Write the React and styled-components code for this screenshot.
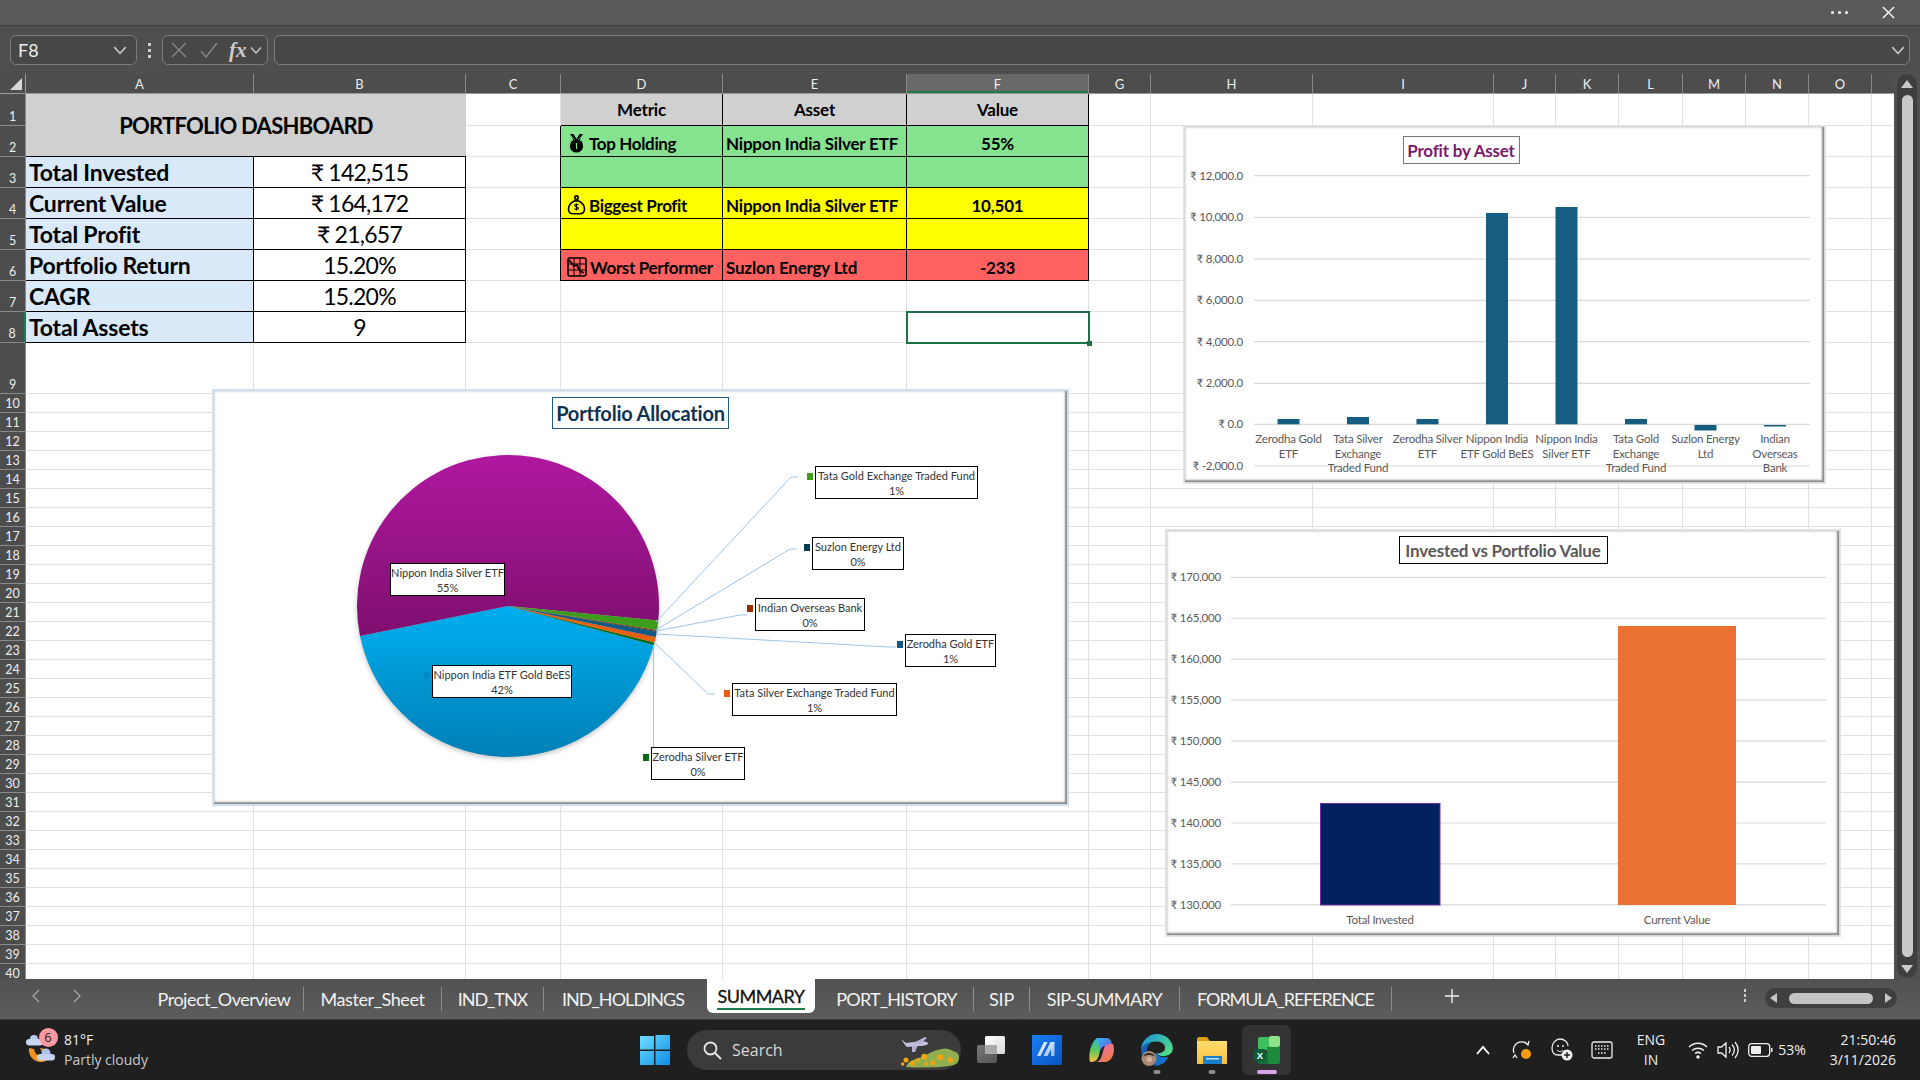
import React from "react";
import styled, { createGlobalStyle } from "styled-components";

const NARROW = `Lato, "Liberation Sans", sans-serif`;
const UI = `"Open Sans", "Noto Sans", sans-serif`;

const Global = createGlobalStyle`
  html, body { margin: 0; padding: 0; background: #1f1f1f; }
  body { font-family: ${NARROW}; overflow: hidden; }
  * { box-sizing: border-box; }
`;

const COLS = [228, 212, 95, 162, 184, 182, 62, 162, 181, 62, 63, 64, 63, 63, 63, 63, 22];
const LETTERS = "ABCDEFGHIJKLMNO".split("");
const ROWS = [32, 31, 31, 31, 31, 31, 31, 31, 51, ...Array(31).fill(19)];

const Window = styled.div`
  width: 1920px; height: 1080px; display: flex; flex-direction: column; overflow: hidden;
`;
const TitleBar = styled.div`
  height: 26px; flex: none; background: #5a5a5a; border-bottom: 1px solid #3c3c3c;
  display: flex; align-items: center; justify-content: flex-end; padding-right: 25px; gap: 34px; color: #fff;
`;
const Dots = styled.div`
  display: flex; gap: 4px;
  span { width: 3px; height: 3px; border-radius: 50%; background: #fff; display: block; }
`;
const FormulaBar = styled.div`
  height: 48px; flex: none; background: #4f4f4f; display: flex; align-items: center; padding: 0 10px; color: #ddd;
`;
const NameBox = styled.div`
  width: 127px; height: 30px; border: 1px solid #7c7c7c; border-radius: 6px; background: #474747;
  display: flex; align-items: center; justify-content: space-between; padding: 0 8px 0 7px;
  font: 400 18px ${NARROW}; color: #eee;
`;
const Grip = styled.div`
  width: 25px; display: flex; flex-direction: column; align-items: center; gap: 3px;
  span { width: 3px; height: 3px; background: #ccc; display: block; }
`;
const FxBox = styled.div`
  width: 106px; height: 30px; border: 1px solid #7c7c7c; border-radius: 6px; background: #474747;
  display: flex; align-items: center; padding: 0 3px 0 7px; gap: 11px; margin-right: 6px;
`;
const FxText = styled.i`font: italic 700 21px "Liberation Serif", serif; color: #ccc; margin-right: -9px; margin-left: -1px;`;
const FormulaInput = styled.div`
  flex: 1; height: 30px; border: 1px solid #7c7c7c; border-radius: 6px; background: #474747;
  display: flex; align-items: center; justify-content: flex-end; padding-right: 3px;
`;
const SheetRow = styled.div`flex: 1; display: flex; min-height: 0;`;
const SheetMain = styled.div`flex: 1; min-width: 0; display: flex; flex-direction: column;`;
const ColHeader = styled.div`
  height: 20px; flex: none; display: flex; background: #4d4d4d; border-bottom: 1px solid #9a9a9a;
`;
const Corner = styled.div`
  width: 26px; flex: none; display: flex; align-items: flex-end; justify-content: flex-end; padding: 0 3px 3px 0;
  border-right: 1px solid #9a9a9a;
  &::after { content: ""; width: 0; height: 0;
    border-style: solid; border-width: 0 0 12px 12px; border-color: transparent transparent #d8d8d8 transparent; }
`;
const ColCell = styled.div`
  width: ${p => p.$w}px; flex: none; display: flex; align-items: center; justify-content: center;
  font: 400 13px ${NARROW}; color: #eee;
  border-right: ${p => (p.$last ? "none" : "1px solid #8a8a8a")};
  background: ${p => (p.$active ? "#686868" : "transparent")};
  box-shadow: ${p => (p.$active ? "inset 0 -2px 0 #1f7a4c" : "none")};
`;
const Body = styled.div`flex: 1; display: flex; min-height: 0;`;
const RowHeaders = styled.div`
  width: 26px; flex: none; background: #4d4d4d; overflow: hidden; display: flex; flex-direction: column;
`;
const RowNum = styled.div`
  height: ${p => p.$h}px; flex: none; display: flex; align-items: ${p => (p.$h > 19 ? "flex-end" : "center")}; justify-content: center;
  font: 400 12.5px ${NARROW}; color: #eee; padding-bottom: ${p => (p.$h > 19 ? 1 : 0)}px;
  border-bottom: 1px solid #8a8a8a; border-right: ${p => (p.$active ? "2px solid #1f7a4c" : "1px solid #8a8a8a")};
`;
const SheetArea = styled.div`flex: 1; position: relative; overflow: hidden; background: #fff;`;
const Grid = styled.div`
  display: grid; height: 100%;
  grid-template-columns: ${COLS.map(c => c + "px").join(" ")};
  grid-template-rows: ${ROWS.map(c => c + "px").join(" ")};
`;
const Blank = styled.div`border-right: 1px solid #e0e0e0; border-bottom: 1px solid #e0e0e0;`;
const Merged = styled.div`
  grid-column: 1 / span 2; grid-row: 1 / span 2; background: #d0d0d0; border-bottom: 1px solid #000;
  display: flex; align-items: center; justify-content: center;
  font: 700 22px ${NARROW}; color: #000; white-space: nowrap; letter-spacing: -0.75px;
`;
const KpiLabel = styled.div`
  background: #daE9f8; border-right: 1px solid #000; border-bottom: 1px solid #000;
  display: flex; align-items: flex-end; padding: 0 0 0 3px; white-space: nowrap;
  font: 700 23px/29px ${NARROW}; color: #000; letter-spacing: -0.2px;
`;
const KpiValue = styled.div`
  background: #fff; border-right: 1px solid #000; border-bottom: 1px solid #000;
  display: flex; align-items: flex-end; justify-content: center; white-space: nowrap;
  font: 400 23px/29px ${NARROW}; color: #000; letter-spacing: -0.75px;
`;
const TONES = { gray: "#d0d0d0", green: "#85e28f", yellow: "#ffff00", red: "#ff6161" };
const MetricCell = styled.div`
  background: ${p => TONES[p.$tone]};
  border-right: 1px solid #000; border-bottom: 1px solid #000;
  box-shadow: ${p => (p.$first ? "-1px 0 0 #000" : "none")};
  display: flex; align-items: flex-end; gap: 3px; white-space: nowrap;
  justify-content: ${p => (p.$center ? "center" : "flex-start")};
  padding: ${p => (p.$tone === "gray" ? "0 3px 5px" : p.$first ? "0 0 2px 6px" : "0 3px 2px")};
  font: 700 17px/21px ${NARROW}; color: #000; letter-spacing: ${p => (p.$first ? -0.35 : -0.2)}px;
  position: relative;
  svg { flex: none; margin-bottom: 1px; }
`;
const Selected = styled.div`
  border: 2px solid #1f7145; position: relative; margin: -1px;
  z-index: 2;
  &::after { content: ""; position: absolute; right: -4px; bottom: -4px; width: 5px; height: 5px; background: #1f7145; }
`;
const VScroll = styled.div`
  width: 26px; flex: none; background: #505050; display: flex; padding: 0 3px 1px 3px;
`;
const VTrack = styled.div`
  flex: 1; background: #3e3e3e; border-radius: 10px; display: flex; flex-direction: column; align-items: center;
  padding: 6px 0 5px;
`;
const VThumb = styled.div`width: 11px; flex: 1; margin: 7px 0 8px; background: #c9c9c9; border-radius: 6px;`;
const Arrow = styled.div`
  flex: none; width: 0; height: 0;
  border-left: 6px solid transparent; border-right: 6px solid transparent;
  ${p => (p.$up ? "border-bottom: 8px solid #c9c9c9;" : "border-top: 8px solid #c9c9c9;")}
`;

/* charts */
const ChartFrame = styled.div`
  position: absolute; left: ${p => p.$x - 26}px; top: ${p => p.$y - 94}px;
  width: ${p => p.$w}px; height: ${p => p.$h}px; background: #fff;
  border: 1px solid ${p => p.$edge || "#d9d9d9"};
  box-shadow: inset -3px -3px 2px -1px #8b8b8b, inset 2px 2px 2px -1px #dcdcdc, 0 0 0 1px ${p => p.$edge || "#e4e4e4"};
  z-index: 3; display: flex; justify-content: center; align-items: flex-start; padding-top: ${p => p.$pad}px;
  svg.plot { position: absolute; left: -1px; top: -1px; }
  svg.plot text { font-family: ${NARROW}; }
`;
const ChartTitle = styled.div`
  position: relative; width: ${p => p.$w}px; height: ${p => p.$h}px; margin-left: ${p => p.$shift || 0}px;
  border: 1px solid ${p => p.$border}; color: ${p => p.$color}; background: #fff;
  display: flex; align-items: center; justify-content: center;
  font: 700 ${p => p.$size}px ${NARROW}; white-space: nowrap; letter-spacing: -0.2px;
`;
const PieLabel = styled.div`
  position: absolute; left: ${p => p.$l - 1}px; top: ${p => p.$t - 1}px; width: ${p => p.$w}px; height: 33px;
  background: #fff; border: 1px solid #000; text-align: center; white-space: nowrap;
  font: 400 11px/15px ${NARROW}; color: #333; padding-top: 1px;
  &::before { content: ""; position: absolute; left: -9px; top: 6px; width: 6px; height: 7px; background: ${p => p.$mark}; }
`;

/* tabs */
const TabBar = styled.div`
  height: 41px; flex: none; background: linear-gradient(#525252, #5c5c5c);
  border-bottom: 1px solid #3a3a3a; display: flex; align-items: flex-start; padding-left: 25px; color: #f2f2f2;
`;
const TabNav = styled.div`
  width: 120px; height: 33px; display: flex; align-items: center; gap: 29px; padding-left: 5px; flex: none;
`;
const Tab = styled.div`
  height: ${p => (p.$active ? 34 : 24)}px; margin: ${p => (p.$active ? "0 5px" : "8px 0 0")};
  width: ${p => p.$w}px; flex: none; display: flex; align-items: center; justify-content: center;
  font: 400 18px ${NARROW}; white-space: nowrap; letter-spacing: ${p => p.$ls}px;
  color: ${p => (p.$active ? "#111" : "#f2f2f2")};
  border-right: ${p => (p.$active || p.$plain ? "none" : "1px solid #8d8d8d")};
  ${p => p.$active && `background: #fff; border-radius: 0 0 6px 6px; position: relative; -webkit-text-stroke: 0.3px #111;
    &::after { content: ""; position: absolute; left: 10px; right: 10px; bottom: 3px; height: 2px; background: #1f7a4c; }`}
`;
const Plus = styled.div`width: 119px; height: 33px; flex: none; display: flex; align-items: center; justify-content: center;`;
const TabGrip = styled(Grip)`margin: 0 9px 0 auto; width: 22px; height: 33px; justify-content: center; gap: 2.5px; span { height: 2.5px; width: 2.5px; }`;
const HScroll = styled.div`
  margin: 9px 23px 0 0; width: 132px; height: 20px; flex: none; border-radius: 10px; background: #3f3f3f;
  display: flex; align-items: center; justify-content: space-between; padding: 0 5px;
`;
const HThumb = styled.div`width: 84px; height: 11px; border-radius: 6px; background: #c4c4c4;`;
const HArrow = styled.div`
  width: 0; height: 0; border-top: 5px solid transparent; border-bottom: 5px solid transparent;
  ${p => (p.$left ? "border-right: 7px solid #c4c4c4;" : "border-left: 7px solid #c4c4c4;")}
`;

/* taskbar */
const Taskbar = styled.div`
  height: 60px; flex: none; background: #1f1f1f; color: #eee; font-family: ${UI};
  display: flex; align-items: center;
`;
const Weather = styled.div`width: 640px; flex: none; display: flex; align-items: center; padding-left: 26px; gap: 7px;`;
const WeatherIcon = styled.div`width: 31px; height: 30px; position: relative;`;
const Badge = styled.div`
  position: absolute; left: 12.5px; top: -7px; width: 19px; height: 19px; border-radius: 50%;
  background: #ff9aa2; color: #222; font: 400 13px/19px ${UI}; text-align: center;
`;
const Stack = styled.div`display: flex; flex-direction: column; font-size: 14px; line-height: 20px; align-items: ${p => p.$align || "flex-start"};`;
const Muted = styled.span`color: #c8c8c8;`;
const Search = styled.div`
  width: 274px; height: 40px; margin-left: 17px; flex: none; background: #3b3b3b; border-radius: 20px; position: relative;
  display: flex; align-items: center; padding-left: 15px; gap: 10px; font-size: 16px; color: #d8d8d8;
`;
const SearchArt = styled.svg`position: absolute; right: 1px; top: 2px;`;
const Apps = styled.div`display: flex; margin-left: 3px; flex: none;`;
const AppSlot = styled.div`
  width: 55px; height: 50px; flex: none; display: flex; align-items: center; justify-content: center; position: relative;
  &::before { content: ""; position: absolute; inset: 0 3px; border-radius: 6px; background: ${p => (p.$open ? "#333" : "transparent")}; }
  > svg { position: relative; }
`;
const RunDot = styled.span`
  position: absolute; left: 50%; bottom: 1px; transform: translateX(-50%); height: 4px; border-radius: 3px;
  width: ${p => (p.$open ? 20 : 7)}px; background: ${p => (p.$open ? "#d4a6e6" : "#8c8c8c")};
`;
const TrayRow = styled.div`margin-left: auto; display: flex; align-items: center; padding-right: 24px; flex: none;`;
const TraySlot = styled.div`
  width: ${p => p.$w}px; flex: none; display: flex; align-items: center; justify-content: ${p => p.$j || "center"};
  font-size: 14px; line-height: 20px; white-space: nowrap;
`;

const Chev = ({ c = "#ccc", s = 14 }) => (
  <svg width={s} height={s} viewBox="0 0 14 14" fill="none"><path d="M2 4.5 7 10l5-5.5" stroke={c} strokeWidth="1.4" /></svg>
);

const Medal = () => (
  <svg width="19" height="19" viewBox="0 0 19 19">
    <path d="M3 0h3.5l3 5 3-5H16l-3.5 6.5L16 8l-13 0 3.5-1.5z" fill="#000" />
    <path d="M3.5 1.2 8 6M15.5 1.2 11 6" stroke="#85e28f" strokeWidth=".8" />
    <circle cx="9.5" cy="12" r="6.6" fill="#000" />
    <path d="M9.5 9v6" stroke="#85e28f" strokeWidth="1.2" />
  </svg>
);
const Bag = () => (
  <svg width="19" height="20" viewBox="0 0 19 20" fill="none" stroke="#000" strokeWidth="1.6">
    <circle cx="9.5" cy="2.6" r="1.7" />
    <path d="M7.5 5.2h4M7.3 6c-4 2-5.8 5-5.8 8 0 3 2 4.8 5 4.8h6c3 0 5-1.8 5-4.800 0-3-1.800-6-5.800-8z" />
    <path d="M11.5 9.8c-.5-.8-3.7-1-3.9.5-.2 1.7 4 1.2 3.900 3-.1 1.500-3.400 1.300-4 .3M9.500 8.500v7" strokeWidth="1.1" />
  </svg>
);
const DownChart = () => (
  <svg width="20" height="20" viewBox="0 0 20 20" fill="none" stroke="#000">
    <rect x="1" y="1" width="18" height="18" rx="2" strokeWidth="1.6" />
    <path d="M1 7h18M1 13h18M7 1v18M13 1v18" strokeWidth="1" />
    <path d="M2 3l5 6 3-1 3 6 4 2" strokeWidth="1.8" />
  </svg>
);

/* Pie helper */
const CX = 508, CY = 606, R = 151;
const ptY = (y, right = true) => {
  const dy = y - CY;
  const dx = Math.sqrt(R * R - dy * dy);
  return [CX + (right ? dx : -dx), y];
};
const wedge = (y1, y2) => {
  const a = ptY(y1), b = ptY(y2);
  return `M${CX} ${CY}L${a[0]} ${a[1]}A${R} ${R} 0 0 1 ${b[0]} ${b[1]}Z`;
};
const magB = ptY(620.5), blueL = ptY(636, false), blueR = ptY(645);

const PieChart = () => (
  <ChartFrame $x={213} $y={390} $w={855} $h={415} $edge="#cfe0f2" $pad={6}>
    <svg className="plot" width="855" height="415" viewBox="213 390 855 415">
      <defs>
        <linearGradient id="mag" gradientUnits="userSpaceOnUse" x1="0" y1="455" x2="0" y2="640">
          <stop offset="0" stopColor="#b0189f" /><stop offset="1" stopColor="#7d0f6e" />
        </linearGradient>
        <linearGradient id="blu" gradientUnits="userSpaceOnUse" x1="0" y1="606" x2="0" y2="757">
          <stop offset="0" stopColor="#00aeef" /><stop offset="1" stopColor="#007fb6" />
        </linearGradient>
        <filter id="soft" x="-10%" y="-10%" width="120%" height="120%">
          <feGaussianBlur stdDeviation="2.5" />
        </filter>
      </defs>
      <ellipse cx={CX} cy={CY + 2} rx={R} ry={R} fill="#9a9a9a" filter="url(#soft)" opacity=".6" />
      <path d={`M${CX} ${CY}L${blueR[0]} ${blueR[1]}A${R} ${R} 0 0 1 ${blueL[0]} ${blueL[1]}Z`} fill="url(#blu)" />
      <path d={`M${CX} ${CY}L${blueL[0]} ${blueL[1]}A${R} ${R} 0 1 1 ${magB[0]} ${magB[1]}Z`} fill="url(#mag)" />
      <path d={wedge(642.5, 645)} fill="#0a6a14" />
      <path d={wedge(637, 642.5)} fill="#e8600f" />
      <path d={wedge(632, 637)} fill="#0f5a85" />
      <path d={wedge(631, 632)} fill="#003a55" />
      <path d={wedge(630, 631)} fill="#9a3005" />
      <path d={wedge(620.5, 630)} fill="#3c9d1c" />
      <g fill="none" stroke="#9cc4ea" strokeWidth="1">
        <path d="M656 622L791 477h7" />
        <path d="M656 630L790 549h7" />
        <path d="M656 631L740 615h7" />
        <path d="M656 634L889 647h7" />
        <path d="M653.5 641.7L708 694h7" />
        <path d="M653.5 645V748" />
      </g>
    </svg>
    <ChartTitle $w={177} $h={32} $border="#1f5a80" $color="#0e3350" $size={20}>Portfolio Allocation</ChartTitle>
    <PieLabel $l={177} $t={173} $w={115} $mark="#8a1280">Nippon India Silver ETF<br />55%</PieLabel>
    <PieLabel $l={219} $t={275} $w={140} $mark="#0088c8">Nippon India ETF Gold BeES<br />42%</PieLabel>
    <PieLabel $l={602} $t={76} $w={163} $mark="#3c9d1c">Tata Gold Exchange Traded Fund<br />1%</PieLabel>
    <PieLabel $l={599} $t={147} $w={92} $mark="#003a55">Suzlon Energy Ltd<br />0%</PieLabel>
    <PieLabel $l={542} $t={208} $w={110} $mark="#9a3005">Indian Overseas Bank<br />0%</PieLabel>
    <PieLabel $l={692} $t={244} $w={91} $mark="#0f5a85">Zerodha Gold ETF<br />1%</PieLabel>
    <PieLabel $l={519} $t={293} $w={165} $mark="#e8600f">Tata Silver Exchange Traded Fund<br />1%</PieLabel>
    <PieLabel $l={438} $t={357} $w={94} $mark="#0a6a14">Zerodha Silver ETF<br />0%</PieLabel>
  </ChartFrame>
);

const profitTicks = [
  ["₹ 12,000.0", 175.7], ["₹ 10,000.0", 217.3], ["₹ 8,000.0", 258.8], ["₹ 6,000.0", 300.3],
  ["₹ 4,000.0", 341.6], ["₹ 2,000.0", 383.3], ["₹ 0.0", 424.3], ["₹ -2,000.0", 466],
];
const profitBars = [
  [1288.5, 419, 5.3], [1358, 417, 7.3], [1427.5, 419, 5.3], [1497, 213, 211.3],
  [1566.5, 207, 217.3], [1636, 419, 5.3], [1705.5, 425, 5.5], [1775, 425, 1.5],
];
const profitCats = [
  ["Zerodha Gold", "ETF"], ["Tata Silver", "Exchange", "Traded Fund"], ["Zerodha Silver", "ETF"],
  ["Nippon India", "ETF Gold BeES"], ["Nippon India", "Silver ETF"], ["Tata Gold", "Exchange", "Traded Fund"],
  ["Suzlon Energy", "Ltd"], ["Indian", "Overseas", "Bank"],
];

const ProfitChart = () => (
  <ChartFrame $x={1184} $y={126} $w={641} $h={357} $pad={9}>
    <svg className="plot" width="641" height="357" viewBox="1184 126 641 357">
      {profitTicks.map(([t, y]) => (
        <g key={t}>
          <line x1="1254" x2="1810" y1={y} y2={y} stroke="#d9d9d9" strokeWidth="1.2" />
          <text x="1243" y={y + 4} textAnchor="end" fontSize="11.5" letterSpacing="-0.2" fill="#595959">{t}</text>
        </g>
      ))}
      {profitBars.map(([c, y, h]) => <rect key={c} x={c - 11} y={y} width="22" height={h} fill="#155e82" />)}
      {profitCats.map((lines, i) => (
        <text key={i} textAnchor="middle" fontSize="11.5" letterSpacing="-0.2" fill="#595959">
          {lines.map((l, j) => <tspan key={j} x={1288.5 + 69.5 * i} y={443 + j * 14.5}>{l}</tspan>)}
        </text>
      ))}
    </svg>
    <ChartTitle $w={117} $h={28} $shift={-87} $border="#777" $color="#7b1a70" $size={17}>Profit by Asset</ChartTitle>
  </ChartFrame>
);

const valueTicks = ["170,000", "165,000", "160,000", "155,000", "150,000", "145,000", "140,000", "135,000", "130,000"];

const ValueChart = () => (
  <ChartFrame $x={1166} $y={530} $w={674} $h={406} $pad={5}>
    <svg className="plot" width="674" height="406" viewBox="1166 530 674 406">
      {valueTicks.map((t, i) => {
        const y = 577.3 + i * 40.95;
        return (
          <g key={t}>
            <line x1="1231" x2="1826" y1={y} y2={y} stroke="#d9d9d9" strokeWidth="1.2" />
            <text x="1221" y={y + 4} textAnchor="end" fontSize="11.5" letterSpacing="-0.2" fill="#595959">₹ {t}</text>
          </g>
        );
      })}
      <rect x="1320.5" y="803.5" width="119.5" height="101.5" fill="#002060" stroke="#7030a0" strokeWidth="1" />
      <rect x="1618" y="626" width="118" height="279" fill="#ea7132" />
      <text x="1380" y="924" textAnchor="middle" fontSize="11.5" letterSpacing="-0.2" fill="#595959">Total Invested</text>
      <text x="1677" y="924" textAnchor="middle" fontSize="11.5" letterSpacing="-0.2" fill="#595959">Current Value</text>
    </svg>
    <ChartTitle $w={209} $h={28} $border="#000" $color="#595959" $size={17}>Invested vs Portfolio Value</ChartTitle>
  </ChartFrame>
);

const kpis = [
  ["Total Invested", "₹ 142,515"], ["Current Value", "₹ 164,172"], ["Total Profit", "₹ 21,657"],
  ["Portfolio Return", "15.20%"], ["CAGR", "15.20%"], ["Total Assets", "9"],
];
const metrics = [
  [["Metric", "Asset", "Value"], "gray", null],
  [["Top Holding", "Nippon India Silver ETF", "55%"], "green", <Medal />],
  [["", "", ""], "green", null],
  [["Biggest Profit", "Nippon India Silver ETF", "10,501"], "yellow", <Bag />],
  [["", "", ""], "yellow", null],
  [["Worst Performer", "Suzlon Energy Ltd", "-233"], "red", <DownChart />],
];

const renderCells = () => {
  const out = [];
  ROWS.forEach((_, r) => {
    COLS.forEach((__, c) => {
      const k = `${r}-${c}`;
      if (r < 2 && c < 2) {
        if (r === 0 && c === 0) out.push(<Merged key={k}>PORTFOLIO DASHBOARD</Merged>);
        return;
      }
      if (r >= 2 && r < 8 && c === 0) { out.push(<KpiLabel key={k}>{kpis[r - 2][0]}</KpiLabel>); return; }
      if (r >= 2 && r < 8 && c === 1) { out.push(<KpiValue key={k}>{kpis[r - 2][1]}</KpiValue>); return; }
      if (r < 6 && c >= 3 && c <= 5) {
        const [texts, tone, icon] = metrics[r];
        const idx = c - 3;
        out.push(
          <MetricCell key={k} $tone={tone} $first={idx === 0 && tone !== "gray"} $center={idx === 2 || tone === "gray"}>
            {idx === 0 && icon}{texts[idx]}
          </MetricCell>
        );
        return;
      }
      if (r === 7 && c === 5) { out.push(<Selected key={k} />); return; }
      out.push(<Blank key={k} />);
    });
  });
  return out;
};

const tabs = [
  ["Project_Overview", 159, -0.5], ["Master_Sheet", 138, -0.4], ["IND_TNX", 102, -1.05], ["IND_HOLDINGS", 158, -0.95], ["SUMMARY", 108, -0.5, true],
  ["PORT_HISTORY", 154, -0.8], ["SIP", 56, -0.2], ["SIP-SUMMARY", 150, -0.65], ["FORMULA_REFERENCE", 212, -1.1],
];

export default function App() {
  return (
    <Window>
      <Global />
      <TitleBar>
        <Dots><span /><span /><span /></Dots>
        <svg width="13" height="13" viewBox="0 0 14 14"><path d="M1 1l12 12M13 1 1 13" stroke="#fff" strokeWidth="1.4" /></svg>
      </TitleBar>
      <FormulaBar>
        <NameBox>F8 <Chev s={16} /></NameBox>
        <Grip><span /><span /><span /></Grip>
        <FxBox>
          <svg width="18" height="18" viewBox="0 0 18 18"><path d="M2 2l14 14M16 2 2 16" stroke="#8a8a8a" strokeWidth="1.3" /></svg>
          <svg width="20" height="18" viewBox="0 0 20 18" fill="none"><path d="M2 10l5 6L18 2" stroke="#8a8a8a" strokeWidth="1.3" /></svg>
          <FxText>fx</FxText>
          <Chev />
        </FxBox>
        <FormulaInput><Chev s={16} /></FormulaInput>
      </FormulaBar>
      <SheetRow>
        <SheetMain>
          <ColHeader>
            <Corner />
            {COLS.map((w, i) => <ColCell key={i} $w={w} $active={i === 5} $last={i === 16}>{LETTERS[i] || ""}</ColCell>)}
          </ColHeader>
          <Body>
            <RowHeaders>
              {ROWS.map((h, i) => <RowNum key={i} $h={h} $active={i === 7}>{i + 1}</RowNum>)}
            </RowHeaders>
            <SheetArea>
              <Grid>{renderCells()}</Grid>
              <PieChart />
              <ProfitChart />
              <ValueChart />
            </SheetArea>
          </Body>
        </SheetMain>
        <VScroll>
          <VTrack>
            <Arrow $up />
            <VThumb />
            <Arrow />
          </VTrack>
        </VScroll>
      </SheetRow>
      <TabBar>
        <TabNav>
          <svg width="12" height="16" viewBox="0 0 12 16" fill="none"><path d="M9 2 3 8l6 6" stroke="#aaa" strokeWidth="1.2" /></svg>
          <svg width="12" height="16" viewBox="0 0 12 16" fill="none"><path d="M3 2l6 6-6 6" stroke="#aaa" strokeWidth="1.2" /></svg>
        </TabNav>
        {tabs.map(([t, w, ls, a], i) => <Tab key={t} $w={w} $ls={ls} $active={a} $plain={i === 3}>{t}</Tab>)}
        <Plus><svg width="16" height="16" viewBox="0 0 16 16"><path d="M8 1v14M1 8h14" stroke="#eee" strokeWidth="1.4" /></svg></Plus>
        <TabGrip><span /><span /><span /></TabGrip>
        <HScroll><HArrow $left /><HThumb /><HArrow /></HScroll>
      </TabBar>
      <Taskbar>
        <Weather>
          <WeatherIcon>
            <svg width="31" height="30" viewBox="0 0 31 30">
              <circle cx="8" cy="4" r="4" fill="#b9c9ee" /><rect x="0" y="4" width="17" height="6.5" rx="3.2" fill="#c9d6f2" />
              <path d="M3 13c-1 8 5 14 12 14 4 0 7-2 8-4-8 1-14-3-15-9z" fill="#f0921e" />
              <path d="M14 13c3 0 5 1 7 3l-4 3z" fill="#f0921e" />
              <circle cx="20" cy="18" r="4.5" fill="#aac2ec" /><rect x="11" y="19" width="18" height="6.500" rx="3.200" fill="#c4d3f1" />
            </svg>
            <Badge>6</Badge>
          </WeatherIcon>
          <Stack>81°F<Muted>Partly cloudy</Muted></Stack>
        </Weather>
        <svg width="30" height="30" viewBox="0 0 30 30" style={{ flex: "none" }}>
          <defs><linearGradient id="win" x1="0" y1="0" x2="1" y2="1"><stop offset="0" stopColor="#6fe0ff" /><stop offset="1" stopColor="#0f8be8" /></linearGradient></defs>
          <path d="M0 1h14v13.5H0zM15.5 0H30v14.5H15.5zM0 16h14v14H0zM15.5 16H30v14H15.500z" fill="url(#win)" />
        </svg>
        <Search>
          <svg width="20" height="20" viewBox="0 0 20 20" fill="none"><circle cx="8.5" cy="8.5" r="6" stroke="#e6e6e6" strokeWidth="1.8" /><path d="M13 13l6 6" stroke="#e6e6e6" strokeWidth="2" /></svg>
          Search
          <SearchArt width="62" height="38" viewBox="0 0 62 38">
            <path d="M3 7l5 4 16-2q7 1 6 3-2 2-10 2l-11 1-2-2z" fill="#c6bfdc" />
            <path d="M15 11 27 5l2 1-7 6zM14 14l6-1-3 7h-3z" fill="#b7aed2" />
            <path d="M8 35c2-7 10-8 16-10 6-3 12-7 20-8 6-2 10 2 14 3 4 2 4 10 0 12-8 4-38 4-50 3z" fill="#8fae50" />
            <g fill="#f2a410">
              <circle cx="8" cy="28" r="2.500" /><circle cx="14.700" cy="31.300" r="2.500" /><circle cx="26.300" cy="24.700" r="3" />
              <circle cx="34.700" cy="30.700" r="2.500" /><circle cx="42.300" cy="25.300" r="3" /><circle cx="52.300" cy="28" r="2.800" />
              <circle cx="28" cy="32" r="2" /><circle cx="4.700" cy="32" r="1.800" /><circle cx="20" cy="28" r="2" />
            </g>
          </SearchArt>
        </Search>
        <Apps>
          <AppSlot>
            <svg width="29" height="28" viewBox="0 0 29 28">
              <defs>
                <linearGradient id="tv1" x1="0" y1="0" x2="1" y2="1"><stop offset="0" stopColor="#fff" /><stop offset="1" stopColor="#d8d8d8" /></linearGradient>
                <linearGradient id="tv2" x1="0" y1="0" x2="1" y2="1"><stop offset="0" stopColor="#777" /><stop offset="1" stopColor="#555" /></linearGradient>
              </defs>
              <rect x="0" y="9" width="20" height="18" rx="2" fill="url(#tv2)" />
              <rect x="8" y="0" width="20" height="18" rx="1.500" fill="url(#tv1)" />
              <rect x="8" y="9" width="12" height="9" fill="#a9a9a9" />
            </svg>
          </AppSlot>
          <AppSlot>
            <svg width="30" height="30" viewBox="0 0 30 30">
              <defs>
                <linearGradient id="mi" x1="0" y1="0" x2="1" y2="1"><stop offset="0" stopColor="#1a7ff0" /><stop offset="1" stopColor="#0a53c4" /></linearGradient>
                <linearGradient id="ms" x1="0" y1="0" x2="1" y2="1"><stop offset="0" stopColor="#ffffff" /><stop offset="1" stopColor="#8fbcf5" /></linearGradient>
              </defs>
              <rect width="30" height="30" fill="url(#mi)" />
              <path d="M5 21 12 7h3.500L8.500 21zM11.500 21 18.500 7h4v14h-3.500v-7l-3.500 7z" fill="url(#ms)" />
            </svg>
          </AppSlot>
          <AppSlot>
            <svg width="28" height="28" viewBox="0 0 28 28">
              <defs>
                <linearGradient id="co1" x1="0" y1="0" x2="1" y2="1"><stop offset="0" stopColor="#2fb4f0" /><stop offset="1" stopColor="#7b4fe0" /></linearGradient>
                <linearGradient id="co2" x1="0" y1="0" x2="0" y2="1"><stop offset="0" stopColor="#2bb8d8" /><stop offset=".5" stopColor="#58c860" /><stop offset="1" stopColor="#f9c23c" /></linearGradient>
                <linearGradient id="co3" x1="0" y1="0" x2="1" y2="1"><stop offset="0" stopColor="#e86ac8" /><stop offset="1" stopColor="#f08030" /></linearGradient>
              </defs>
              <path d="M9 2h11c-4 0-6 3-7 8l-2 9c-1 4-3 7-8 7H2c-2-8 1-20 7-24z" fill="url(#co2)" />
              <path d="M9 2h9c4 0 5 2 6 6l1 3-7-1c-3 0-5 2-5 5z" fill="url(#co1)" />
              <path d="M25 8c3 8-1 18-8 18H7c4 0 6-3 7-7l2-7c1-3 4-4 9-4z" fill="url(#co3)" />
            </svg>
          </AppSlot>
          <AppSlot>
            <svg width="32" height="32" viewBox="0 0 93 94">
              <defs><linearGradient id="ed" x1="0" y1="0" x2="1" y2=".7"><stop offset="0" stopColor="#1a8fe0" /><stop offset="1" stopColor="#4fdc88" /></linearGradient></defs>
              <path d="M0 45C2 18 22 0 47 0c25 0 46 20 46 42 0 16-15 23-27 23-8 0-16-3-20-8 16 0 24-7 24-16 0-13-12-19-24-19C25 22 8 30 0 45z" fill="url(#ed)" />
              <path d="M0 45c5-15 18-21 30-19-10 6-14 16-14 27 0 20 14 35 36 39C22 96-2 76 0 45z" fill="#0f62b4" />
              <path d="M46 57c6 10 20 14 34 10-6 14-18 24-34 26-10-8-14-20-12-36z" fill="#1274c8" />
              <circle cx="23" cy="72" r="22" fill="#a88a76" />
              <path d="M6 66c4-14 30-14 34 0-10-6-24-6-34 0z" fill="#2f2723" />
              <circle cx="24" cy="74" r="8" fill="#d2b09a" />
            </svg>
            <RunDot />
          </AppSlot>
          <AppSlot>
            <svg width="30" height="27" viewBox="0 0 30 27">
              <defs><linearGradient id="fo" x1="0" y1="0" x2="0" y2="1"><stop offset="0" stopColor="#ffdc6e" /><stop offset="1" stopColor="#f7c23c" /></linearGradient></defs>
              <path d="M0 2a2 2 0 0 1 2-2h8l3 4h17v4H0z" fill="#d99f12" />
              <rect x="0" y="4" width="30" height="23" rx="1" fill="url(#fo)" />
              <rect x="6" y="19" width="19" height="8" fill="#1a7fd0" /><rect x="9" y="21" width="13" height="1.500" fill="#bfe4ff" />
            </svg>
            <RunDot />
          </AppSlot>
          <AppSlot $open>
            <svg width="26" height="28" viewBox="0 0 26 28">
              <rect x="4" y="1" width="12" height="13" rx="2" fill="#3fbf5f" />
              <rect x="15" y="0" width="11" height="11" rx="2" fill="#8fe48a" />
              <path d="M13 11h13v15a2 2 0 0 1-2 2H13z" fill="#1e8a3c" />
              <rect x="4" y="17" width="10" height="11" rx="1" fill="#15703a" />
              <rect x="0" y="13" width="12" height="12" rx="2" fill="#0e5c36" />
              <text x="6" y="22.500" textAnchor="middle" fontSize="9.500" fontWeight="700" fill="#fff" fontFamily="Liberation Sans, sans-serif">X</text>
            </svg>
            <RunDot $open />
          </AppSlot>
        </Apps>
        <TrayRow>
          <TraySlot $w={34}>
            <svg width="14" height="10" viewBox="0 0 14 10" fill="none"><path d="M1 9l6-7 6 7" stroke="#fff" strokeWidth="1.8" /></svg>
          </TraySlot>
          <TraySlot $w={44}>
            <svg width="22" height="22" viewBox="0 0 22 22" fill="none">
              <path d="M17 6C14 2 8 2 5 5c-3 3-3 7-2 9M14 3l3 3 1-4M6 19l-2-3-2 3" stroke="#eee" strokeWidth="1.3" />
              <circle cx="15" cy="15" r="5" fill="#f39c12" />
            </svg>
          </TraySlot>
          <TraySlot $w={36}>
            <svg width="22" height="24" viewBox="0 0 22 24" fill="none">
              <path d="M15 17H7c-4 0-6-3-6-7 0-5 4-9 8-9s8 3 8 7" stroke="#eee" strokeWidth="1.3" />
              <circle cx="7" cy="8" r="1" fill="#eee" /><circle cx="12" cy="8" r="1" fill="#eee" /><path d="M6 12c2 2 4 2 6 0" stroke="#eee" />
              <circle cx="16" cy="17" r="5.5" fill="#eee" /><path d="M13 17h6M16 14v6" stroke="#1f1f1f" strokeWidth="1.4" />
            </svg>
          </TraySlot>
          <TraySlot $w={44}>
            <svg width="22" height="20" viewBox="0 0 22 20" fill="none">
              <rect x="1" y="2" width="20" height="16" rx="2" stroke="#eee" strokeWidth="1.3" />
              <path d="M4 6h14M4 9h14M7 13h8" stroke="#eee" strokeWidth="1.3" strokeDasharray="1.5 1.5" />
            </svg>
          </TraySlot>
          <TraySlot $w={54}><Stack $align="center">ENG<span>IN</span></Stack></TraySlot>
          <TraySlot $w={40}>
            <svg width="20" height="20" viewBox="0 0 20 20" fill="none" stroke="#eee" strokeWidth="1.5">
              <path d="M1 7c5-5 13-5 18 0M4 10.5c3.5-3 8.5-3 12 0M7 13.5c2-1.500 4-1.500 6 0" /><circle cx="10" cy="17" r="1" fill="#eee" />
            </svg>
          </TraySlot>
          <TraySlot $w={20}>
            <svg width="22" height="20" viewBox="0 0 22 20" fill="none" stroke="#eee" strokeWidth="1.3" style={{ flex: "none" }}>
              <path d="M1 7h3.500L9 3v14l-4.500-4H1zM12 7c1.500 2 1.500 4 0 6M15 4.500c3 3.500 3 7.500 0 11M18 2c4 5 4 11 0 16" />
            </svg>
          </TraySlot>
          <TraySlot $w={35} $j="flex-end">
            <svg width="25" height="14" viewBox="0 0 25 14" fill="none">
              <rect x=".7" y=".7" width="21" height="12.6" rx="3" stroke="#eee" strokeWidth="1.3" />
              <rect x="3" y="3" width="10" height="8" rx="1" fill="#eee" /><rect x="23" y="5" width="1.5" height="4" fill="#eee" />
            </svg>
          </TraySlot>
          <TraySlot $w={38}>53%</TraySlot>
          <TraySlot $w={85} $j="flex-end"><Stack $align="flex-end">21:50:46<span>3/11/2026</span></Stack></TraySlot>
        </TrayRow>
      </Taskbar>
    </Window>
  );
}
